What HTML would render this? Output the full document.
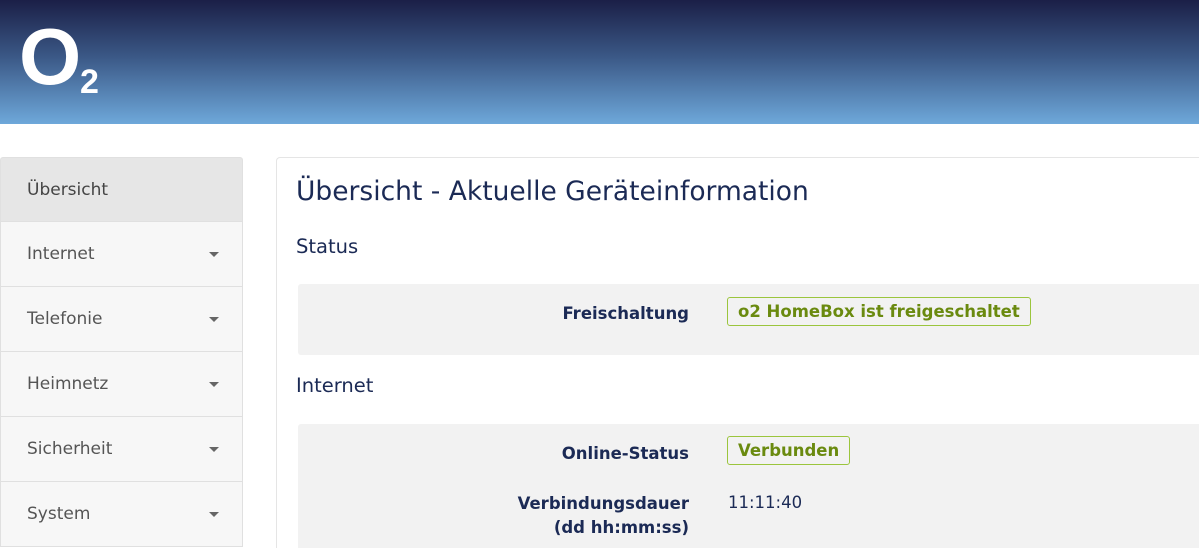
<!DOCTYPE html>
<html><head><meta charset="utf-8"><style>
*{margin:0;padding:0;box-sizing:border-box}
html,body{width:1199px;height:548px;overflow:hidden}
body{background:#fff;font-family:"DejaVu Sans","Liberation Sans",sans-serif;position:relative}
.hdr{position:absolute;left:0;top:0;width:1199px;height:124px;background:linear-gradient(#1b1f47,#3a5785 45%,#6ea8da)}
.o{position:absolute;left:19px;top:12px;color:#fff;font:bold 80px "Liberation Sans",sans-serif;line-height:90px}
.two{position:absolute;left:80px;top:62px;color:#fff;font:bold 34px "Liberation Sans",sans-serif;line-height:40px}
.side{position:absolute;left:0;top:157px;width:243px}
.it{height:65px;border:1px solid #e0e0e0;border-top:none;background:#f7f7f7;color:#555;font-size:17px;padding-left:26px;line-height:64px;position:relative}
.it.a{background:#e6e6e6;border-top:1px solid #e0e0e0;border-radius:3px 3px 0 0;color:#444}
.it .c{position:absolute;left:208px;top:30px;border-left:5px solid transparent;border-right:5px solid transparent;border-top:5px solid #666}
.main{position:absolute;left:276px;top:157px;width:923px;height:391px;border:1px solid #e5e5e5;border-right:none;border-bottom:none;border-radius:4px 0 0 0}
.t{position:absolute;color:#1b2a55}
.box{position:absolute;left:298px;width:901px;background:#f2f2f2;border-radius:3px 0 0 3px}
.lb{position:absolute;right:510px;text-align:right;font-weight:bold;font-size:16.5px;color:#1b2a55;line-height:24px}
.bd{position:absolute;left:727px;height:29px;border:1px solid #9bc53d;border-radius:3px;color:#6a8a0f;font-weight:bold;font-size:16.5px;padding:0 10px;line-height:27px}
</style></head><body>
<div class="hdr"><div class="o">O</div><div class="two">2</div></div>
<div class="side">
<div class="it a">Übersicht</div>
<div class="it">Internet<span class="c"></span></div>
<div class="it">Telefonie<span class="c"></span></div>
<div class="it">Heimnetz<span class="c"></span></div>
<div class="it">Sicherheit<span class="c"></span></div>
<div class="it">System<span class="c"></span></div>
</div>
<div class="main"></div>
<div class="t" style="left:296px;top:176px;font-size:26.5px">Übersicht - Aktuelle Geräteinformation</div>
<div class="t" style="left:296px;top:235px;font-size:19.5px">Status</div>
<div class="box" style="top:284px;height:71px"></div>
<div class="lb" style="top:302px">Freischaltung</div>
<div class="bd" style="top:297px">o2 HomeBox ist freigeschaltet</div>
<div class="t" style="left:296px;top:374px;font-size:19.5px">Internet</div>
<div class="box" style="top:424px;height:124px;border-radius:3px 0 0 0"></div>
<div class="lb" style="top:442px">Online-Status</div>
<div class="bd" style="top:436px">Verbunden</div>
<div class="lb" style="top:492px">Verbindungsdauer<br>(dd hh:mm:ss)</div>
<div class="t" style="left:728px;top:493px;font-size:16.5px">11:11:40</div>
</body></html>
